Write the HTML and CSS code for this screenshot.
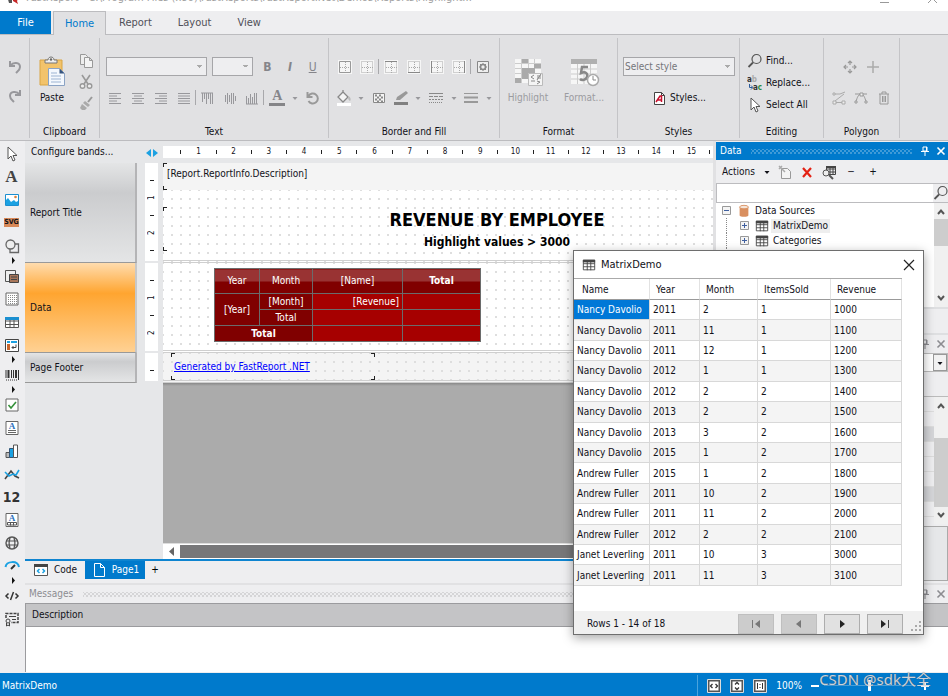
FILE: index.html
```html
<!DOCTYPE html>
<html lang="en">
<head>
    <meta charset="UTF-8">
    <meta name="viewport" content="width=device-width, initial-scale=1.0">
    <title>FastReport - MatrixDemo</title>
    <link rel="stylesheet" href="styles.css">
</head>
<body>
    <!-- shared icons -->
    <svg class="defs" aria-hidden="true">
        <symbol id="i-undo" viewBox="0 0 16 16"><path d="M3 2v5h5M3.500 6.500C6 3 13 3 13 8c0 3-2 4-4 6" fill="none" stroke="currentColor" stroke-width="2"/></symbol>
        <symbol id="i-left" viewBox="0 0 16 16"><path d="M2 3.500h12M2 6h8M2 8.500h12M2 11h8M2 13.500h12" stroke="currentColor"/></symbol>
        <symbol id="i-center" viewBox="0 0 16 16"><path d="M2 3.500h12M4 6h8M2 8.500h12M4 11h8M2 13.500h12" stroke="currentColor"/></symbol>
        <symbol id="i-right" viewBox="0 0 16 16"><path d="M2 3.500h12M6 6h8M2 8.500h12M6 11h8M2 13.500h12" stroke="currentColor"/></symbol>
        <symbol id="i-full" viewBox="0 0 16 16"><path d="M2 3.500h12M2 6h12M2 8.500h12M2 11h12M2 13.500h12" stroke="currentColor"/></symbol>
        <symbol id="i-top" viewBox="0 0 16 16"><path d="M3.500 3v9M5.500 3v6M7.500 3v11M9.500 3v6M11.500 3v11M13.500 3v11M2 3h12" stroke="currentColor" fill="none"/></symbol>
        <symbol id="i-middle" viewBox="0 0 16 16"><path d="M3.500 5v7M5.500 3v11M7.500 5v7M9.500 3v11M11.500 3v11M13.500 6v5" stroke="currentColor" fill="none"/></symbol>
        <symbol id="i-bottom" viewBox="0 0 16 16"><path d="M2.500 6v8M4.500 8v6M6.500 4v10M8.500 7v7M10.500 3v11M12.500 3v11M2 14h12" stroke="currentColor" fill="none"/></symbol>
        <symbol id="i-drop" viewBox="0 0 8 8"><path d="M1.500 3h5L4 6z" fill="currentColor"/></symbol>
        <symbol id="i-frame" viewBox="0 0 16 16"><path d="M1 1h14v14H1z" fill="#f6f6f6"/><path d="M8.500 3v11M3 8.500h11" stroke="#aaa" stroke-dasharray="1 1"/></symbol>
        <symbol id="i-dots" viewBox="0 0 16 16"><path d="M2.500 2.500h11v11h-11z" fill="none" stroke="#aaa" stroke-dasharray="1 1"/></symbol>
        <symbol id="i-grid" viewBox="0 0 16 16"><path d="M1.500 2.500h13v11h-13zM1.500 6.500h13M1.500 10h13M6 4v10M10 4v10" fill="#fff" stroke="#444"/><path d="M1 2h14v3H1z" fill="#444"/></symbol>
        <symbol id="i-more" viewBox="0 0 6 7"><path d="M2 0l3 3.500L2 7z" fill="#111"/></symbol>
        <symbol id="i-find" viewBox="0 0 16 16"><circle cx="9.500" cy="6" r="4.500" fill="none" stroke="#555" stroke-width="1.200"/><path d="M6 9.500L1.500 14" stroke="#555" stroke-width="1.800"/></symbol>
        <symbol id="i-pointer" viewBox="0 0 16 16"><path d="M4 1v12l3-3 2 5 2-1-2-4.500h4z" fill="#fff" stroke="#555"/></symbol>
        <symbol id="i-pin" viewBox="0 0 10 10"><path d="M3 1h4v4H3zM1 5.500h8M5 5.500V10M6.500 1v4" fill="none" stroke="currentColor"/></symbol>
        <symbol id="i-close" viewBox="0 0 10 10"><path d="M1.500 1.500l7 7M8.500 1.500l-7 7" stroke="currentColor" stroke-width="1.600"/></symbol>
        <symbol id="i-up" viewBox="0 0 10 10"><path d="M2 7l3-3.500L8 7" fill="none" stroke="#555" stroke-width="2"/></symbol>
        <symbol id="i-down" viewBox="0 0 10 10"><path d="M2 3l3 3.500L8 3" fill="none" stroke="#555" stroke-width="2"/></symbol>
        <symbol id="i-plus" viewBox="0 0 9 9"><path d="M.5.5h8v8h-8z" fill="#f4f4f4" stroke="#999"/><path d="M2 4.500h5M4.500 2v5" stroke="#3f5f9f"/></symbol>
    </svg>

    <header class="titlebar">
        <svg class="app-logo" viewBox="0 0 16 16"><path d="M1 3h6v11H4z" fill="#555"/><path d="M8 8h6l-2 4 1 3-5-3z" fill="#c62828"/></svg>
        <span class="caption">FastReport - C:\Program Files (x86)\FastReports\FastReport.Net\Demos\Reports\Highlight...</span>
        <svg class="window-controls" viewBox="0 0 60 16"><path d="M0 13.500h9M48 14l3-3M54 11l3 3" stroke="#999" fill="none"/></svg>
    </header>

    <nav class="tabs">
        <button class="tab file">File</button>
        <button class="tab active">Home</button>
        <button class="tab">Report</button>
        <button class="tab">Layout</button>
        <button class="tab">View</button>
    </nav>

    <div class="ribbon">
        <section class="group history">
            <div class="stack">
                <button class="tool" aria-label="Undo"><svg class="icon"><use href="#i-undo"/></svg></button>
                <button class="tool" aria-label="Redo"><svg class="icon flip"><use href="#i-undo"/></svg></button>
            </div>
        </section>

        <section class="group clipboard">
            <div class="content">
                <button class="big">
                    <svg class="icon-big" viewBox="0 0 32 32"><path d="M4 4h22v25H4z" fill="#f2c36b" stroke="#d9a545"/><path d="M9 7V4h3c0-4 6-4 6 0h3v3z" fill="#eee" stroke="#777"/><circle cx="15" cy="3.500" r="1.200" fill="#666"/><path d="M12.500 12.500h11l5 5v12h-16z" fill="#f4f8fd" stroke="#8ba3c4"/><path d="M23.500 12.500v5h5z" fill="#37557f"/><path d="M15 17h6M15 20h10M15 23h10M15 26h10" stroke="#9db4d2"/></svg>
                    <span>Paste</span>
                </button>
                <div class="stack">
                    <button class="tool" aria-label="Copy"><svg class="icon" viewBox="0 0 16 16"><path d="M2.500 1.500h5l2 2v8h-7z" fill="#eee" stroke="#999"/><path d="M6.500 4.500h5l3 3v7h-8zM11.500 4.500v3h3" fill="#f4f4f4" stroke="#999"/></svg></button>
                    <button class="tool" aria-label="Cut"><svg class="icon" viewBox="0 0 16 16"><path d="M4 1l6 9M12 1l-6 9" stroke="#999" stroke-width="1.600"/><circle cx="4.500" cy="12" r="2.300" fill="#eee" stroke="#999" stroke-width="1.400"/><circle cx="11.500" cy="12" r="2.300" fill="#eee" stroke="#999" stroke-width="1.400"/></svg></button>
                    <button class="tool" aria-label="Format painter"><svg class="icon" viewBox="0 0 16 16"><path d="M14 2l-4 5" stroke="#999" stroke-width="2"/><path d="M7 6l5 4-2 2-5-4zM4 9l5 4-2 2H4l-2-2z" fill="#aaa"/></svg></button>
                </div>
            </div>
            <h2>Clipboard</h2>
        </section>

        <section class="group text">
            <div class="rows">
                <div class="row">
                    <select class="font-name" aria-label="Font" disabled><option></option></select>
                    <select class="font-size" aria-label="Font size" disabled><option></option></select>
                    <button class="tool letter bold">B</button>
                    <button class="tool letter italic">I</button>
                    <button class="tool letter underline">U</button>
                </div>
                <div class="row">
                    <button class="tool" aria-label="Align left"><svg class="icon"><use href="#i-left"/></svg></button>
                    <button class="tool" aria-label="Align center"><svg class="icon"><use href="#i-center"/></svg></button>
                    <button class="tool" aria-label="Align right"><svg class="icon"><use href="#i-right"/></svg></button>
                    <button class="tool sep" aria-label="Justify"><svg class="icon"><use href="#i-full"/></svg></button>
                    <button class="tool" aria-label="Align top"><svg class="icon"><use href="#i-top"/></svg></button>
                    <button class="tool" aria-label="Align middle"><svg class="icon"><use href="#i-middle"/></svg></button>
                    <button class="tool sep" aria-label="Align bottom"><svg class="icon"><use href="#i-bottom"/></svg></button>
                    <button class="tool letter color">A</button>
                    <button class="tool drop" aria-label="Text colors"><svg><use href="#i-drop"/></svg></button>
                    <button class="tool" aria-label="Rotate"><svg class="icon" viewBox="0 0 16 16"><path d="M2.500 2v5h5M3.500 6a5 5 0 1 1 0 5" fill="none" stroke="#999" stroke-width="2"/></svg></button>
                </div>
            </div>
            <h2>Text</h2>
        </section>

        <section class="group border">
            <div class="rows">
                <div class="row">
                    <button class="tool" aria-label="All lines"><svg class="icon" viewBox="0 0 16 16"><use href="#i-frame"/><path d="M2.500 2.500h11v11h-11z" fill="none" stroke="#999"/></svg></button>
                    <button class="tool sep" aria-label="No lines"><svg class="icon" viewBox="0 0 16 16"><use href="#i-frame"/><use href="#i-dots"/></svg></button>
                    <button class="tool" aria-label="Top line"><svg class="icon" viewBox="0 0 16 16"><use href="#i-frame"/><use href="#i-dots"/><path d="M2 2.500h12" stroke="#888"/></svg></button>
                    <button class="tool" aria-label="Bottom line"><svg class="icon" viewBox="0 0 16 16"><use href="#i-frame"/><use href="#i-dots"/><path d="M2 13.500h12" stroke="#888"/></svg></button>
                    <button class="tool" aria-label="Left line"><svg class="icon" viewBox="0 0 16 16"><use href="#i-frame"/><use href="#i-dots"/><path d="M2.500 2v12" stroke="#888"/></svg></button>
                    <button class="tool sep" aria-label="Right line"><svg class="icon" viewBox="0 0 16 16"><use href="#i-frame"/><use href="#i-dots"/><path d="M13.500 2v12" stroke="#888"/></svg></button>
                    <button class="tool" aria-label="Edit border"><svg class="icon" viewBox="0 0 16 16"><path d="M2.500 2.500h11v11h-11z" fill="#eee" stroke="#888"/><circle cx="8" cy="8" r="2.500" fill="none" stroke="#888" stroke-width="1.600"/><path d="M8 4v1M8 11v1M4 8h1M11 8h1M5 5l1 1M11 5l-1 1M5 11l1-1M11 11l-1-1" stroke="#888"/></svg></button>
                </div>
                <div class="row">
                    <button class="tool" aria-label="Fill color"><svg class="icon" viewBox="0 0 16 16"><path d="M1 13h14v3H1z" fill="#fff"/><path d="M7 2l5 5-5 5-5-5zM7 2V0" fill="#f4f4f4" stroke="#888" stroke-width="1.300"/><path d="M12 6c3 1 3 4 2 5-2-1-2-3-2-5z" fill="#bbb"/></svg></button>
                    <button class="tool drop" aria-label="Fill colors"><svg><use href="#i-drop"/></svg></button>
                    <button class="tool" aria-label="Fill style"><svg class="icon" viewBox="0 0 16 16"><path d="M2.500 3.500h11v9h-11z" fill="#f4f4f4" stroke="#888"/><path d="M4 5.500h8M4 9.500h8" stroke="#888" stroke-width="2" stroke-dasharray="2 2"/><path d="M6 7.500h6M6 11.500h6" stroke="#888" stroke-width="2" stroke-dasharray="2 2"/></svg></button>
                    <button class="tool" aria-label="Line color"><svg class="icon" viewBox="0 0 16 16"><path d="M1 12h14v3H1z" fill="#808080"/><path d="M3 10l1-3 9-6 2 2-8 7z" fill="#999"/></svg></button>
                    <button class="tool drop" aria-label="Line colors"><svg><use href="#i-drop"/></svg></button>
                    <button class="tool wide" aria-label="Line style"><svg class="icon" viewBox="0 0 16 16"><path d="M1 3.500h14" stroke="#888"/><path d="M1 6.500h14" stroke="#888" stroke-dasharray="4 1"/><path d="M1 9.500h14" stroke="#888" stroke-dasharray="2 1"/><path d="M1 12.500h14" stroke="#888" stroke-dasharray="1 1"/></svg></button>
                    <button class="tool drop" aria-label="Line styles"><svg><use href="#i-drop"/></svg></button>
                    <button class="tool wide" aria-label="Line width"><svg class="icon" viewBox="0 0 16 16"><path d="M1 3.500h14" stroke="#999"/><path d="M1 7.500h14M1 12h14" stroke="#999" stroke-width="2"/></svg></button>
                    <button class="tool drop" aria-label="Line widths"><svg><use href="#i-drop"/></svg></button>
                </div>
            </div>
            <h2>Border and Fill</h2>
        </section>

        <section class="group format">
            <div class="content">
                <button class="big off">
                    <svg class="icon-big" viewBox="0 0 32 32"><path d="M3 3h26v24H3z" fill="#f6f6f6"/><path d="M3 7.500h26M3 12.500h26M3 17.500h26M3 22.500h26M9.500 3v24M16.500 3v24M22.500 3v24" stroke="#ccc"/><path d="M10 3h6v4h-6zM10 12h6v6h-6zM22 8h7v4h-7zM10 18h12v5H10zM3 22h6v5H3zM16 12h7v5h-7z" fill="#aaa"/><path d="M16.500 17.500h14v12h-14z" fill="#f4f4f4" stroke="#bbb"/><path d="M22 19l-3 2 3 2M19 25h4M25 20h4M25 22h4M29 18l-4 6M25 25l3 1-3 2" fill="none" stroke="#888"/></svg>
                    <span>Highlight</span>
                </button>
                <button class="big off">
                    <svg class="icon-big" viewBox="0 0 32 32"><path d="M3 3h26v25H3z" fill="#f6f6f6"/><path d="M3 3h26v5H3z" fill="#b0b0b0"/><path d="M3 13h26M3 18h26M3 23h26M9.500 8v20M16 8v20M22.500 8v20" stroke="#ccc"/><path d="M20 11h-6l-1 6c5-2 7 1 6 4-1 3-5 4-7 2" fill="none" stroke="#888" stroke-width="2.500"/><circle cx="25" cy="24" r="5.500" fill="#fff" stroke="#aaa" stroke-width="1.500"/><path d="M25 20v4h3" fill="none" stroke="#888"/></svg>
                    <span>Format...</span>
                </button>
            </div>
            <h2>Format</h2>
        </section>

        <section class="group styles">
            <div class="rows">
                <div class="row">
                    <select class="style-name" aria-label="Style" disabled><option>Select style</option></select>
                </div>
                <div class="row">
                    <button class="item"><svg class="icon" viewBox="0 0 16 16"><path d="M3.500 2.500h7l3 3v9h-10z" fill="#fff" stroke="#444"/><path d="M10.500 2.500v3h3" fill="none" stroke="#444"/><path d="M5 12l4-6h1.500v6M6.500 10h4" fill="none" stroke="#c8102e" stroke-width="1.500"/></svg>Styles...</button>
                </div>
            </div>
            <h2>Styles</h2>
        </section>

        <section class="group editing">
            <div class="stack">
                <button class="item"><svg class="icon"><use href="#i-find"/></svg>Find...</button>
                <button class="item"><svg class="icon" viewBox="0 0 16 16"><text x="0" y="7" class="ab">a<tspan class="pale">b</tspan></text><path d="M2.500 9v3.500h3M4 10.500l2 2-2 2" fill="none" stroke="#2a5a9a"/><text x="6" y="15" class="ab">a<tspan class="green">c</tspan></text></svg>Replace...</button>
                <button class="item"><svg class="icon"><use href="#i-pointer"/></svg>Select All</button>
            </div>
            <h2>Editing</h2>
        </section>

        <section class="group polygon">
            <div class="rows">
                <div class="row">
                    <button class="tool" aria-label="Move"><svg class="icon" viewBox="0 0 16 16"><path d="M8 2v4M8 10v4M2 8h4M10 8h4M6 4l2-2 2 2M6 12l2 2 2-2M4 6L2 8l2 2M12 6l2 2-2 2" fill="none" stroke="#999" stroke-width="1.200"/></svg></button>
                    <button class="tool" aria-label="Add point"><svg class="icon" viewBox="0 0 16 16"><path d="M8 2v12M2 8h12" stroke="#aaa" stroke-width="1.500"/></svg></button>
                </div>
                <div class="row">
                    <button class="tool" aria-label="Curve"><svg class="icon" viewBox="0 0 16 16"><path d="M3 4h6l5-2M13 4L4 11M4 12.500h9" fill="none" stroke="#aaa"/><path d="M2 3h2v2H2zM2 11h3v3H2zM11 11h3v3h-3z" fill="#eee" stroke="#aaa"/></svg></button>
                    <button class="tool" aria-label="Bezier"><svg class="icon" viewBox="0 0 16 16"><path d="M2 4h12M3 12c1-5 3-8 5-8s4 3 5 8" fill="none" stroke="#999"/><path d="M7 3h3v3H7zM2 11h2v2H2zM12 11h2v2h-2z" fill="#eee" stroke="#999"/></svg></button>
                    <button class="tool" aria-label="Delete"><svg class="icon" viewBox="0 0 16 16"><path d="M3 4h10M6 4V2h4v2M4 4v10h8V4M6.500 6v6M8 6v6M9.500 6v6" fill="none" stroke="#999"/></svg></button>
                </div>
            </div>
            <h2>Polygon</h2>
        </section>
    </div>

    <div class="workspace">
        <!-- report objects -->
        <aside class="toolbox">
            <button aria-label="Select"><svg class="icon"><use href="#i-pointer"/></svg></button>
            <button class="serif">A</button>
            <button aria-label="Picture"><svg class="icon" viewBox="0 0 16 16"><path d="M1.500 2.500h13v11h-13z" fill="#fff" stroke="#1b8fd0"/><path d="M2 13V8l2-2 3 4 3-2 2 2 2-1v4z" fill="#1ba1e2"/><circle cx="11.500" cy="5" r="1.300" fill="#d9803a"/></svg></button>
            <button aria-label="SVG"><span class="svg-mark">SVG</span></button>
            <button aria-label="Shape"><svg class="icon" viewBox="0 0 16 16"><path d="M10 6h4.500v8.500H6V11" fill="none" stroke="#666" stroke-width="1.300"/><circle cx="6.500" cy="6.500" r="4.500" fill="#eee" stroke="#666" stroke-width="1.300"/></svg></button>
            <button class="more" aria-label="More shapes"><svg><use href="#i-more"/></svg></button>
            <button aria-label="Subreport"><svg class="icon" viewBox="0 0 16 16"><path d="M1.500 2.500h10v11h-10z" fill="#eee" stroke="#555"/><path d="M5.500 6.500h9v8h-9z" fill="#a8765a" stroke="#444"/><path d="M7 9h6M7 11.500h6" stroke="#444"/></svg></button>
            <button aria-label="Container"><svg class="icon" viewBox="0 0 16 16"><path d="M2 2h12v12H2z" fill="#fff" stroke="#666"/><path d="M4 4.500h9M4 6.500h9M4 8.500h9M4 10.500h9M4 12.500h9" stroke="#888" stroke-dasharray="1 1"/></svg></button>
            <button aria-label="Table"><svg class="icon" viewBox="0 0 16 16"><path d="M1.500 3.500h13v10h-13zM1.500 7h13M1.500 10.500h13M6 6v8M10 6v8" fill="#fff" stroke="#555"/><path d="M1 3h14v3H1z" fill="#1b8fd0"/></svg></button>
            <button aria-label="Matrix"><svg class="icon" viewBox="0 0 16 16"><path d="M1.500 2.500h13v12h-13z" fill="#fff" stroke="#444"/><path d="M3 4h3v2H3zM7 4h6v2H7z" fill="#1ba1e2"/><path d="M3 7h3v6H3z" fill="#c8652c"/><path d="M12 7.500v3H8M9.500 9L8 10.500 9.500 12" fill="none" stroke="#444"/></svg></button>
            <button class="more" aria-label="More tables"><svg><use href="#i-more"/></svg></button>
            <button aria-label="Barcode"><svg class="icon" viewBox="0 0 16 16"><path d="M2 3v8M7.500 3v8M9.500 3v8M14.500 3v10" stroke="#333"/><path d="M4.500 3v8M12 3v8" stroke="#333" stroke-width="2"/><path d="M2 13h11" stroke="#333" stroke-dasharray="1 1"/></svg></button>
            <button class="more" aria-label="More barcodes"><svg><use href="#i-more"/></svg></button>
            <button aria-label="Check box"><svg class="icon" viewBox="0 0 16 16"><path d="M2 2h12v12H2z" fill="#fff" stroke="#666"/><path d="M4.500 8l2.500 3 5-6" fill="none" stroke="#35913a" stroke-width="1.600"/></svg></button>
            <button aria-label="Rich text"><svg class="icon" viewBox="0 0 16 16"><path d="M2 1.500h12v13H2z" fill="#fff" stroke="#666"/><text x="8" y="9" class="mini">A</text><path d="M4 10.500h8M4 12.500h8" stroke="#666"/></svg></button>
            <button aria-label="Chart"><svg class="icon" viewBox="0 0 16 16"><path d="M2 9.500h3.500v5H2z" fill="#bbb" stroke="#555"/><path d="M5.500 5.500h4v9h-4z" fill="#1ba1e2" stroke="#357"/><path d="M9.500 2h4v12.500h-4z" fill="#fff" stroke="#555"/></svg></button>
            <button aria-label="Sparkline"><svg class="icon" viewBox="0 0 16 16"><path d="M1 13l6-8 4 5 4 2" fill="none" stroke="#444" stroke-width="1.600"/><path d="M1 6l4 4 4-2 3 1 3-5" fill="none" stroke="#1ba1e2" stroke-width="1.600"/></svg></button>
            <button class="digits">12</button>
            <button aria-label="Cellular text"><svg class="icon" viewBox="0 0 16 16"><path d="M2 1.500h12v13H2z" fill="#fff" stroke="#666"/><text x="8" y="9" class="mini">A</text><path d="M3.500 10.500h9v2.500h-9zM6.500 10.500v3M9.500 10.500v3" fill="none" stroke="#555"/></svg></button>
            <button aria-label="Map"><svg class="icon" viewBox="0 0 16 16"><circle cx="8" cy="8" r="6" fill="none" stroke="#555" stroke-width="1.400"/><path d="M2 6h12M2 10h12M6 2.500c-1 3-1 8 0 11M10 2.500c1 3 1 8 0 11" fill="none" stroke="#555" stroke-width="1.200"/></svg></button>
            <button aria-label="Gauge"><svg class="icon" viewBox="0 0 16 16"><path d="M1.500 9c1-6 12-7 13.500 0" fill="none" stroke="#1ba1e2" stroke-width="2"/><path d="M7 11l4-4" stroke="#333" stroke-width="2"/></svg></button>
            <button class="more" aria-label="More gauges"><svg><use href="#i-more"/></svg></button>
            <button aria-label="HTML"><svg class="icon" viewBox="0 0 16 16"><path d="M4.500 5.500L2 8l2.500 2.500M11.500 5.500L14 8l-2.500 2.500M9.500 4l-3 8" fill="none" stroke="#333" stroke-width="1.500"/></svg></button>
            <button aria-label="Digital signature"><svg class="icon" viewBox="0 0 16 16"><path d="M2 7V2.500h12v9H7" fill="none" stroke="#444" stroke-width="1.500" stroke-dasharray="3 1"/><path d="M5 5.500h7M8 8.500h4" stroke="#444"/><circle cx="4" cy="10" r="2" fill="none" stroke="#444"/><path d="M2.500 12v3L4 14l1.500 1v-3" fill="none" stroke="#444"/></svg></button>
        </aside>

        <div class="main">
            <div class="upper">
                <div class="editor">
                    <div class="designer">
                        <button class="configure">Configure bands...</button>
                        <svg class="arrows" viewBox="0 0 12 10"><path d="M5 1v8L0 5zM7 1v8l5-4z" fill="#1ba1e2"/></svg>
                        <div class="ruler"><div class="ticks">
                            <i></i><b>1</b><i></i><b>2</b><i></i><b>3</b><i></i><b>4</b><i></i><b>5</b><i></i><b>6</b><i></i><b>7</b><i></i><b>8</b><i></i><b>9</b><i></i><b>10</b><i></i><b>11</b><i></i><b>12</b><i></i><b>13</b><i></i><b>14</b><i></i><b>15</b><i></i>
                        </div></div>

                        <div class="band-name title">Report Title</div>
                        <div class="v-ruler"><i></i><b>1</b><i></i><b>2</b><i></i></div>
                        <div class="band title-band">
                            <div class="sheet">
                                <p class="description corners">[Report.ReportInfo.Description]</p>
                                <div class="heading corners">
                                    <h1>REVENUE BY EMPLOYEE</h1>
                                    <p>Highlight values &gt; 3000</p>
                                </div>
                            </div>
                        </div>

                        <div class="band-name data">Data</div>
                        <div class="v-ruler"><i></i><b>1</b><i></i><b>2</b></div>
                        <div class="band data-band">
                            <table class="matrix">
                                <tr class="head"><td class="c-year">Year</td><td class="c-month">Month</td><td class="c-name">[Name]</td><td class="c-total strong">Total</td></tr>
                                <tr><td rowspan="2">[Year]</td><td>[Month]</td><td class="value">[Revenue]</td><td class="value"></td></tr>
                                <tr><td>Total</td><td class="value"></td><td class="value"></td></tr>
                                <tr><td colspan="2" class="strong">Total</td><td class="value"></td><td class="value"></td></tr>
                            </table>
                        </div>

                        <div class="band-name footer">Page Footer</div>
                        <div class="v-ruler"><i></i></div>
                        <div class="band footer-band">
                            <div class="generated corners"><a href="#">Generated by FastReport .NET</a></div>
                        </div>

                        <div class="canvas"></div>
                        <div class="h-scroll">
                            <svg viewBox="0 0 17 13"><path d="M11 2v9L6 6.500z" fill="#666"/></svg>
                            <div class="thumb"></div>
                        </div>
                    </div>

                    <div class="page-tabs">
                        <button><svg class="icon" viewBox="0 0 16 16"><path d="M1.500 2.500h13v11h-13z" fill="#fff" stroke="#555"/><path d="M1 2h14v3H1z" fill="#444"/><path d="M6.500 7L4.500 9l2 2M9.500 7l2 2-2 2" fill="none" stroke="#1ba1e2" stroke-width="1.500"/></svg>Code</button>
                        <button class="active"><svg class="icon" viewBox="0 0 16 16"><path d="M3.500 1.500h6l4 4v9h-10zM9.500 1.500v4h4" fill="none" stroke="#fff"/></svg>Page1</button>
                        <button class="add">+</button>
                    </div>
                </div>

                <!-- right dock -->
                <aside class="dock">
                    <div class="panel-head blue"><h2>Data</h2><span class="grip"></span><svg><use href="#i-pin"/></svg><svg><use href="#i-close"/></svg></div>
                    <div class="data-tools">
                        <button class="actions">Actions <svg><use href="#i-drop"/></svg></button>
                        <button aria-label="Edit"><svg class="icon" viewBox="0 0 16 16"><path d="M4.500 4.500h6l3 3v7h-9z" fill="#f4f4f4" stroke="#999"/><path d="M2 2l6 6M2 5l3-3" stroke="#aaa" stroke-width="1.500"/></svg></button>
                        <button aria-label="Delete"><svg class="icon" viewBox="0 0 16 16"><path d="M4 4l8 9M12 4l-8 9" stroke="#e32214" stroke-width="2.200"/></svg></button>
                        <button aria-label="View data"><svg class="icon" viewBox="0 0 16 16"><path d="M5.500 2.500h9v8h-9zM5.500 5h9M5.500 8h9M9 3v8M12 3v8" fill="none" stroke="#444"/><path d="M5 2h10v2H5z" fill="#444"/><circle cx="5" cy="9" r="3" fill="#eee" stroke="#555"/><path d="M8 11l4 4" stroke="#555" stroke-width="2"/></svg></button>
                        <button>−</button>
                        <button>+</button>
                    </div>
                    <div class="search"><input type="text" aria-label="Search data"><button aria-label="Search"><svg class="icon"><use href="#i-find"/></svg></button></div>
                    <div class="tree-box">
                        <ul class="tree">
                            <li><svg class="knob" viewBox="0 0 9 9"><path d="M.5.5h8v8h-8z" fill="#f4f4f4" stroke="#999"/><path d="M2 4.500h5" stroke="#3f5f9f"/></svg><svg class="icon" viewBox="0 0 16 16"><path d="M3 3v10c0 2 10 2 10 0V3z" fill="#d98f5f"/><ellipse cx="8" cy="3.500" rx="5" ry="2" fill="#f4e4d8" stroke="#d98f5f"/></svg><span>Data Sources</span></li>
                            <li class="child"><svg class="knob"><use href="#i-plus"/></svg><svg class="icon"><use href="#i-grid"/></svg><span class="picked">MatrixDemo</span></li>
                            <li class="child"><svg class="knob"><use href="#i-plus"/></svg><svg class="icon"><use href="#i-grid"/></svg><span>Categories</span></li>
                            <li class="child"><svg class="knob"><use href="#i-plus"/></svg><svg class="icon"><use href="#i-grid"/></svg></li>
                        </ul>
                        <div class="v-scroll"><svg><use href="#i-up"/></svg><div class="thumb"></div><svg><use href="#i-down"/></svg></div>
                    </div>
                    <div class="dock-tabs"></div>
                    <div class="panel-head"><span class="grip"></span><svg><use href="#i-pin"/></svg><svg><use href="#i-close"/></svg></div>
                    <div class="object-list"><button aria-label="Objects"><svg><use href="#i-drop"/></svg></button></div>
                    <div class="property-tools"></div>
                    <div class="properties">
                        <div class="lines"><i></i><i></i><i class="cat"></i><i></i><i></i><i></i><i class="cat"></i><i></i></div>
                        <div class="v-scroll"><svg><use href="#i-up"/></svg><div class="thumb"></div><svg><use href="#i-down"/></svg></div>
                    </div>
                    <div class="hint"></div>
                </aside>
            </div>

            <div class="messages">
                <div class="panel-head"><h2>Messages</h2><span class="grip"></span><svg><use href="#i-pin"/></svg><svg><use href="#i-close"/></svg></div>
                <div class="list-head">Description</div>
                <div class="list-body"></div>
            </div>
        </div>
    </div>

    <footer class="status">
        <span class="source">MatrixDemo</span>
        <div class="zoom">
            <button aria-label="Page width"><svg viewBox="0 0 14 14"><path d="M.5.5h13v13H.5z" fill="#555" stroke="#ddd"/><path d="M2.500 2.500h9v9h-9z" fill="#fff"/><path d="M5.500 5l-2 2 2 2M8.500 5l2 2-2 2" fill="none" stroke="#333" stroke-width="1.300"/></svg></button>
            <button aria-label="Whole page"><svg viewBox="0 0 14 14"><path d="M.5.5h13v13H.5z" fill="#555" stroke="#ddd"/><path d="M2.500 2.500h9v9h-9z" fill="#fff"/><path d="M5 5.500l2-2 2 2M5 8.500l2 2 2-2" fill="none" stroke="#333" stroke-width="1.300"/></svg></button>
            <button aria-label="Actual size"><svg viewBox="0 0 14 14"><path d="M.5.5h13v13H.5z" fill="#555" stroke="#ddd"/><path d="M2.500 2.500h9v9h-9z" fill="#fff"/><path d="M4.500 4v6M9.500 4v6M7 5v1M7 8v1" stroke="#333"/></svg></button>
            <span class="percent">100%</span>
            <button class="step" aria-label="Zoom out"><svg viewBox="0 0 8 8"><path d="M0 4h8" stroke="#fff" stroke-width="2"/></svg></button>
            <input type="range" min="0" max="100" value="49" aria-label="Zoom">
            <button class="step" aria-label="Zoom in"><svg viewBox="0 0 8 8"><path d="M0 4h8M4 0v8" stroke="#fff" stroke-width="2"/></svg></button>
        </div>
    </footer>

    <!-- data preview window -->
    <div class="dialog" role="dialog" aria-label="MatrixDemo">
        <div class="dialog-head">
            <svg class="icon"><use href="#i-grid"/></svg>
            <span>MatrixDemo</span>
            <button aria-label="Close"><svg viewBox="0 0 12 12"><path d="M1 1l10 10M11 1L1 11" stroke="#222" stroke-width="1.200"/></svg></button>
        </div>
        <table class="rows-table">
            <thead><tr><th class="w-name">Name</th><th class="w-year">Year</th><th class="w-month">Month</th><th class="w-items">ItemsSold</th><th>Revenue</th></tr></thead>
            <tbody>
                <tr><td class="selected">Nancy Davolio</td><td>2011</td><td>2</td><td>1</td><td>1000</td></tr>
                <tr><td>Nancy Davolio</td><td>2011</td><td>11</td><td>1</td><td>1100</td></tr>
                <tr><td>Nancy Davolio</td><td>2011</td><td>12</td><td>1</td><td>1200</td></tr>
                <tr><td>Nancy Davolio</td><td>2012</td><td>1</td><td>1</td><td>1300</td></tr>
                <tr><td>Nancy Davolio</td><td>2012</td><td>2</td><td>2</td><td>1400</td></tr>
                <tr><td>Nancy Davolio</td><td>2013</td><td>2</td><td>2</td><td>1500</td></tr>
                <tr><td>Nancy Davolio</td><td>2013</td><td>3</td><td>2</td><td>1600</td></tr>
                <tr><td>Nancy Davolio</td><td>2015</td><td>1</td><td>2</td><td>1700</td></tr>
                <tr><td>Andrew Fuller</td><td>2015</td><td>1</td><td>2</td><td>1800</td></tr>
                <tr><td>Andrew Fuller</td><td>2011</td><td>10</td><td>2</td><td>1900</td></tr>
                <tr><td>Andrew Fuller</td><td>2011</td><td>11</td><td>2</td><td>2000</td></tr>
                <tr><td>Andrew Fuller</td><td>2012</td><td>2</td><td>2</td><td>2100</td></tr>
                <tr><td>Janet Leverling</td><td>2011</td><td>10</td><td>3</td><td>3000</td></tr>
                <tr><td>Janet Leverling</td><td>2011</td><td>11</td><td>3</td><td>3100</td></tr>
            </tbody>
        </table>
        <div class="pager">
            <span>Rows 1 - 14 of 18</span>
            <button disabled aria-label="First"><svg viewBox="0 0 10 8"><path d="M1.500 0v8" stroke="#777"/><path d="M9 0v8L4 4z" fill="#777"/></svg></button>
            <button disabled aria-label="Previous"><svg viewBox="0 0 10 8"><path d="M7 0v8L2 4z" fill="#777"/></svg></button>
            <button aria-label="Next"><svg viewBox="0 0 10 8"><path d="M3 0v8l5-4z" fill="#222"/></svg></button>
            <button aria-label="Last"><svg viewBox="0 0 10 8"><path d="M8.500 0v8" stroke="#444"/><path d="M1 0v8l5-4z" fill="#222"/></svg></button>
            <svg class="size-grip" viewBox="0 0 10 10"><path d="M8 0h2v2H8zM4 4h2v2H4zM8 4h2v2H8zM0 8h2v2H0zM4 8h2v2H4zM8 8h2v2H8z" fill="#aaa"/></svg>
        </div>
    </div>

    <div class="watermark">CSDN @sdk大全</div>
</body>
</html>
```
FILE: styles.css
```css
* {
    box-sizing: border-box;
}

body {
    display: flex;
    flex-direction: column;
    min-height: 100vh;
    margin: 0;
    position: relative;
    overflow: hidden;
    font: 10px/14px "DejaVu Sans Condensed", "DejaVu Sans", sans-serif;
    color: #111118;
    background: #eeeef0;
}

button {
    display: flex;
    align-items: center;
    justify-content: center;
    margin: 0;
    padding: 0;
    border: 0;
    background: none;
    font: inherit;
    color: inherit;
}

h1, h2, p, ul {
    margin: 0;
    padding: 0;
    list-style: none;
}

h2 {
    font-size: 10px;
    font-weight: normal;
}

svg {
    flex: none;
    display: block;
}

.defs {
    display: none;
}

.icon {
    width: 16px;
    height: 16px;
}

.titlebar {
    display: flex;
    align-items: flex-end;
    height: 11px;
    padding: 0 8px 6px 5px;
    overflow: hidden;
    background: #fff;
    color: #a0a0a0;
}

.app-logo {
    width: 16px;
    height: 16px;
    margin-right: 5px;
}

.caption {
    flex: 1;
    font-size: 11px;
}

.window-controls {
    width: 60px;
    height: 16px;
}

/* tabs */
.tabs {
    display: flex;
    height: 24px;
    border-bottom: 1px solid #bcbcbf;
    font-size: 11px;
}

.tab {
    height: 24px;
    padding: 0 13px;
    color: #505058;
}

.tab.file {
    width: 51px;
    height: 23px;
    margin-right: 2px;
    background: #007acc;
    color: #fff;
}

.tab.active {
    width: 53px;
    border: 1px solid #bcbcbf;
    border-bottom: 0;
    background: #e1e1e3;
    color: #007acc;
}

/* ribbon */
.ribbon {
    display: flex;
    height: 106px;
    padding: 3px 0 2px;
    border-bottom: 1px solid #bcbcbf;
    background: #e1e1e3;
}

.group {
    display: flex;
    flex-direction: column;
    border-right: 1px solid #c4c4c7;
}

.group h2 {
    margin-top: auto;
    line-height: 12px;
    text-align: center;
}

.content {
    display: flex;
    align-items: flex-start;
    padding-top: 18px;
}

.stack {
    display: flex;
    flex-direction: column;
    padding-top: 12px;
}

.stack .tool {
    height: 21px;
}

.history {
    width: 30px;
}

.history .stack {
    padding-top: 18px;
    gap: 8px;
}

.history .tool {
    width: 29px;
}

.clipboard {
    width: 70px;
}

.clipboard .stack {
    padding-top: 0;
    margin-top: -6px;
}

.text {
    width: 229px;
}

.border {
    width: 171px;
}

.format {
    width: 118px;
}

.styles {
    width: 122px;
}

.editing {
    width: 84px;
}

.polygon {
    width: 76px;
}

.flip {
    transform: scaleX(-1);
}

.big {
    flex-direction: column;
    gap: 3px;
    width: 44px;
}

.big.off {
    width: 56px;
    color: #9b9ba0;
}

.icon-big {
    width: 32px;
    height: 32px;
}

.rows {
    display: flex;
    flex-direction: column;
    gap: 8px;
    padding: 17px 4px 0;
}

.row {
    display: flex;
    align-items: center;
    height: 23px;
}

.polygon .row {
    justify-content: center;
}

.tool {
    width: 23px;
    height: 23px;
    color: #98989c;
}

.tool.sep {
    height: 15px;
    border-right: 1px solid #a8a8ab;
}

.tool.drop {
    width: 12px;
}

.tool.wide {
    width: 24px;
}

.drop svg,
.actions svg,
.object-list svg {
    width: 8px;
    height: 8px;
}

.letter {
    font-size: 12px;
    color: #85858a;
}

.bold {
    font-weight: bold;
}

.italic {
    font-style: italic;
    font-weight: bold;
}

.underline {
    text-decoration: underline;
}

.color {
    width: 16px;
    height: 17px;
    margin: 0 4px 0 5px;
    border-bottom: 3px solid #858588;
    font: bold 14px/14px "Liberation Serif", serif;
}

select {
    height: 19px;
    padding: 0 1px;
    border: 1px solid #a6a6a9;
    border-radius: 0;
    appearance: none;
    font: inherit;
    color: #75757a;
    background: #eeeef0;
}

select:disabled {
    opacity: 1;
    background:
        conic-gradient(from -45deg at 50% 100%, #aaa 90deg, transparent 0) no-repeat right 4px center / 6px 3px,
        #eeeef0;
}

.font-name {
    width: 102px;
    margin-left: 2px;
}

.font-size {
    width: 42px;
    margin: 0 3px 0 5px;
}

.style-name {
    width: 112px;
    margin-left: 1px;
}

.item {
    gap: 3px;
    height: 22px;
    justify-content: flex-start;
    white-space: nowrap;
}

.styles .row:last-child {
    justify-content: center;
}

.editing .item {
    padding-left: 7px;
}

.ab {
    font: bold 8px "DejaVu Sans Condensed", sans-serif;
    fill: #333;
}

.pale {
    fill: #aaa;
}

.green {
    fill: #2d8a3e;
}

/* workspace */
.workspace {
    display: flex;
    flex: 1;
}

.toolbox {
    width: 25px;
    padding-top: 1px;
}

.toolbox button {
    width: 23px;
    height: 23px;
}

.toolbox .more {
    height: 7px;
    width: 25px;
}

.more svg {
    width: 6px;
    height: 7px;
}

.toolbox .serif {
    font: bold 17px/17px "Liberation Serif", serif;
    color: #444;
}

.toolbox .digits {
    font-size: 14px;
    font-weight: bold;
    color: #333;
}

.svg-mark {
    width: 15px;
    background: #d88958;
    font-size: 7px;
    line-height: 9px;
    font-weight: bold;
}

.mini {
    font: bold 9px "Liberation Serif", serif;
    fill: #2a6fc0;
    text-anchor: middle;
}

.main {
    display: flex;
    flex-direction: column;
    flex: 1;
    min-width: 0;
}

.upper {
    display: flex;
    height: 442px;
    background: #e1e1e3;
    gap: 3px;
}

.editor {
    display: flex;
    flex-direction: column;
    flex: 1;
    min-width: 0;
}

.designer {
    display: grid;
    grid-template: 22px 100px 90px 30px 1fr 15px / 112px 26px 1fr;
    flex: 1;
    background: #e6e7e9;
}

.designer > * {
    min-width: 0;
}

.configure {
    justify-content: flex-start;
    padding-left: 6px;
}

.arrows {
    width: 12px;
    height: 10px;
    align-self: center;
    margin: 2px 0 0 9px;
}

.ruler {
    align-self: center;
    height: 12px;
    overflow: hidden;
    background: #fff;
    font-size: 8px;
    line-height: 12px;
}

.ticks {
    display: grid;
    grid-template-columns: repeat(31, 1fr);
    margin: 0 -5px 0 9px;
    text-align: center;
}

.ruler i,
.v-ruler i {
    width: 1px;
    height: 4px;
    place-self: center;
    background: #222;
}

.ruler b,
.v-ruler b {
    font-weight: normal;
}

.band-name {
    display: flex;
    align-items: center;
    padding-left: 5px;
    border-right: 2px solid #b4b4b6;
    border-bottom: 1px solid #999;
    background: linear-gradient(#e4e5e6, #cbccce 30%, #e4e5e6);
}

.band-name.data {
    border-right-color: #c8c8c8;
    background: linear-gradient(#ffdcae, #ffa530 34%, #ffd193);
}

.v-ruler {
    display: flex;
    flex-direction: column;
    align-items: center;
    width: 13px;
    margin: 0 0 2px 8px;
    padding-top: 9px;
    background: #fff;
    font-size: 8px;
    line-height: 18px;
}

.v-ruler i {
    width: 4px;
    height: 1px;
    margin: 8px 0;
}

.v-ruler b {
    height: 18px;
    writing-mode: vertical-rl;
    transform: rotate(180deg);
    text-align: center;
}

.band {
    overflow: hidden;
    border-bottom: 3px double #cfcfcf;
    background: #fff radial-gradient(circle at 1px 1px, #dedede 1px, transparent 1px) 8px 8px / 9px 9px;
}

.sheet {
    width: 668px;
}

.corners {
    --mark: linear-gradient(#222, #222);
    background:
        var(--mark) left top / 4px 1px,
        var(--mark) left top / 1px 4px,
        var(--mark) left bottom / 4px 1px,
        var(--mark) left bottom / 1px 4px,
        var(--mark) right top / 4px 1px,
        var(--mark) right top / 1px 4px,
        var(--mark) right bottom / 4px 1px,
        var(--mark) right bottom / 1px 4px;
    background-repeat: no-repeat;
}

.description {
    height: 27px;
    padding: 4px 4px;
    background-color: #f4f4f4;
}

.heading {
    height: 44px;
    margin-top: 17px;
    color: #000;
    text-align: center;
}

.heading h1 {
    font-size: 18px;
    line-height: 26px;
}

.heading p {
    font-size: 12px;
    line-height: 18px;
    font-weight: bold;
}

.matrix {
    width: 267px;
    height: 74px;
    margin: 5px 0 0 51px;
    border-collapse: collapse;
    table-layout: fixed;
    line-height: 14px;
    text-align: center;
    color: #fff;
}

.matrix td {
    height: 16px;
    padding: 0 3px;
    border: 1px solid #6b6b6b;
    background: #800000;
}

.matrix .head td {
    height: 25px;
    background: linear-gradient(#993333 50%, #800000 50%);
}

.matrix .value {
    background: #a60000;
    text-align: right;
}

.c-year {
    width: 45px;
}

.c-month {
    width: 53px;
}

.c-name {
    width: 90px;
}

.strong {
    font-weight: bold;
}

.footer-band {
    background-color: #f4f4f4;
}

.generated {
    width: 204px;
    height: 27px;
    margin-left: 8px;
    padding: 7px 3px;
}

.generated a {
    color: #00f;
}

.canvas {
    grid-column: 3;
    border-bottom: 1px solid #ddd;
    background: linear-gradient(#888, #ababab 3px);
}

.h-scroll {
    grid-column: 3;
    display: flex;
    padding: 1px 0;
    background: #fff;
}

.h-scroll svg {
    width: 17px;
    height: 13px;
}

.h-scroll .thumb {
    flex: 1;
    background: #777779;
}

.page-tabs {
    display: flex;
    height: 24px;
    padding-bottom: 4px;
    border-top: 2px solid #0e84d0;
    background: #eeeef0;
}

.page-tabs button {
    gap: 5px;
    width: 60px;
}

.page-tabs .active {
    background: #007acc;
    color: #fff;
}

.page-tabs .add {
    width: 20px;
    color: #000;
}

/* dock */
.dock {
    display: flex;
    flex-direction: column;
    width: 232px;
    padding-top: 1px;
    background: #eeeef0;
}

.panel-head {
    display: flex;
    align-items: center;
    height: 18px;
    gap: 8px;
    padding: 0 2px 0 4px;
    color: #8c8c90;
}

.panel-head svg {
    width: 10px;
    height: 10px;
}

.panel-head svg:last-child {
    margin-left: -2px;
}

.panel-head.blue {
    background: #007acc;
    color: #fff;
}

.grip {
    flex: 1;
    height: 5px;
    margin-left: 2px;
    background:
        radial-gradient(currentColor 1px, transparent 1px) 0 0 / 4px 4px,
        radial-gradient(currentColor 1px, transparent 1px) 2px 2px / 4px 4px;
    opacity: 0.25;
}

.data-tools {
    display: flex;
    align-items: center;
    height: 23px;
    padding-left: 6px;
}

.data-tools button {
    width: 22px;
    height: 22px;
}

.data-tools .actions {
    width: 50px;
    gap: 8px;
    margin-right: 2px;
    justify-content: flex-start;
    white-space: nowrap;
}

.search {
    display: flex;
    height: 20px;
    border: 1px solid #bcbcbf;
    border-right: 0;
    background: #fff;
}

.search input {
    flex: 1;
    min-width: 0;
    padding: 0 3px;
    border: 0;
    font: inherit;
    outline: 0;
}

.search button {
    width: 15px;
    background: #eeeef0;
}

.tree-box {
    display: flex;
    height: 104px;
    background: #fff;
}

.tree {
    flex: 1;
    overflow: hidden;
    padding-left: 6px;
}

.tree li {
    display: flex;
    align-items: center;
    height: 15px;
}

.tree .icon {
    width: 14px;
    height: 14px;
    margin: 0 2px 0 6px;
}

.tree span {
    padding: 0 2px;
}

.tree .child {
    margin-left: 4px;
    padding-left: 13px;
    border-left: 1px dotted #888;
}

.knob {
    width: 9px;
    height: 9px;
}

.picked {
    background: #eee;
}

.v-scroll {
    display: flex;
    flex-direction: column;
    align-items: center;
    justify-content: space-between;
    width: 14px;
    padding: 4px 0;
    background: #f0f0f0;
}

.v-scroll svg {
    width: 10px;
    height: 10px;
}

.v-scroll .thumb {
    width: 14px;
    height: 27px;
    margin: 2px 0 auto;
    background: #cdcdcd;
}

.dock-tabs {
    height: 28px;
    border-top: 2px solid #dedfe1;
    border-bottom: 2px solid #dedfe1;
}

.object-list {
    display: flex;
    justify-content: flex-end;
    height: 19px;
    border: 1px solid #bbb;
    background: #fff;
}

.object-list button {
    width: 14px;
    border: 1px solid #999;
    background: #f2f2f2;
}

.property-tools {
    height: 25px;
    border-bottom: 1px solid #bbb;
}

.properties {
    display: flex;
    height: 127px;
}

.lines {
    flex: 1;
}

.lines i {
    display: block;
    height: 15px;
    border-bottom: 1px solid #ddd;
}

.lines .cat {
    background: #d5d6d9;
}

.properties .thumb {
    height: 69px;
    margin: auto 0 3px;
}

.hint {
    height: 55px;
    margin-top: 2px;
    border: 1px solid #aaa;
    background: #e6e7e9;
}

/* messages */
.messages {
    display: flex;
    flex-direction: column;
    flex: 1;
    border-top: 2px solid #e1e1e3;
    padding-bottom: 1px;
}

.list-head {
    height: 24px;
    padding: 4px 6px;
    border: 1px solid #9b9b9e;
    border-right: 0;
    background: #c4c4c6;
}

.list-body {
    flex: 1;
    border-left: 1px solid #9b9b9e;
    background: #fff;
}

/* status bar */
.status {
    display: flex;
    align-items: center;
    justify-content: space-between;
    height: 23px;
    padding: 2px 19px 0 2px;
    background: #007acc;
    color: #fff;
}

.zoom {
    display: flex;
    align-items: center;
    height: 21px;
    gap: 9px;
    padding-left: 9px;
    border-left: 1px solid #4aa3dd;
}

.zoom svg {
    width: 14px;
    height: 14px;
}

.zoom .step svg {
    width: 8px;
    height: 8px;
}

.zoom input {
    appearance: none;
    width: 92px;
    height: 12px;
    margin: 0 -4px;
    background: linear-gradient(#4a9fd8, #4a9fd8) no-repeat center / 100% 1px;
}

.zoom input::-webkit-slider-thumb {
    appearance: none;
    width: 3px;
    height: 11px;
    background: #fff;
}

/* data preview window */
.dialog {
    position: absolute;
    top: 250px;
    right: 24px;
    display: flex;
    flex-direction: column;
    width: 351px;
    height: 385px;
    border: 1px solid #6e6e6e;
    background: #fff;
    box-shadow: 0 3px 10px rgba(0, 0, 0, 0.35);
}

.dialog-head {
    display: flex;
    align-items: center;
    height: 27px;
    padding: 0 8px;
    font-size: 11px;
}

.dialog-head .icon {
    width: 14px;
    height: 14px;
}

.dialog-head span {
    flex: 1;
    padding-left: 5px;
}

.dialog-head button svg {
    width: 12px;
    height: 12px;
}

.rows-table {
    width: 328px;
    height: 308px;
    border-spacing: 0;
    border-top: 1px solid #aaa;
    table-layout: fixed;
}

.rows-table th {
    height: 21px;
    padding: 2px 6px 0;
    border-right: 1px solid #e2e2e2;
    border-bottom: 1px solid #999;
    font-weight: normal;
    text-align: left;
}

.rows-table .w-name {
    width: 76px;
    padding-left: 8px;
}

.rows-table td {
    padding: 1px 3px 0;
    border-right: 1px solid #d8d8d8;
    border-bottom: 1px solid #d8d8d8;
    white-space: nowrap;
}

.rows-table tr:nth-child(even) td {
    background: #f4f4f4;
}

.rows-table .selected {
    background: #0078d7;
    color: #fff;
}

.w-year {
    width: 50px;
}

.w-month {
    width: 58px;
}

.w-items {
    width: 73px;
}

.pager {
    display: flex;
    align-items: center;
    height: 23px;
    margin-top: auto;
    padding: 2px 2px 0 13px;
    gap: 7px;
    background: #f0f0f0;
}

.pager span {
    flex: 1;
}

.pager button {
    width: 36px;
    height: 20px;
    border: 1px solid #adadad;
    background: #e1e1e1;
}

.pager button:disabled {
    border-color: #bfbfbf;
    background: #ccc;
}

.pager button svg {
    width: 10px;
    height: 8px;
}

.size-grip {
    width: 10px;
    height: 10px;
    align-self: flex-end;
    margin: 0 0 3px 1px;
}

.watermark {
    position: absolute;
    right: 17px;
    bottom: 7px;
    font: 15px/20px "Noto Sans", "Noto Sans CJK SC", sans-serif;
    color: rgba(255, 255, 255, 0.75);
    text-shadow: 0 0 1px #445;
}
```
